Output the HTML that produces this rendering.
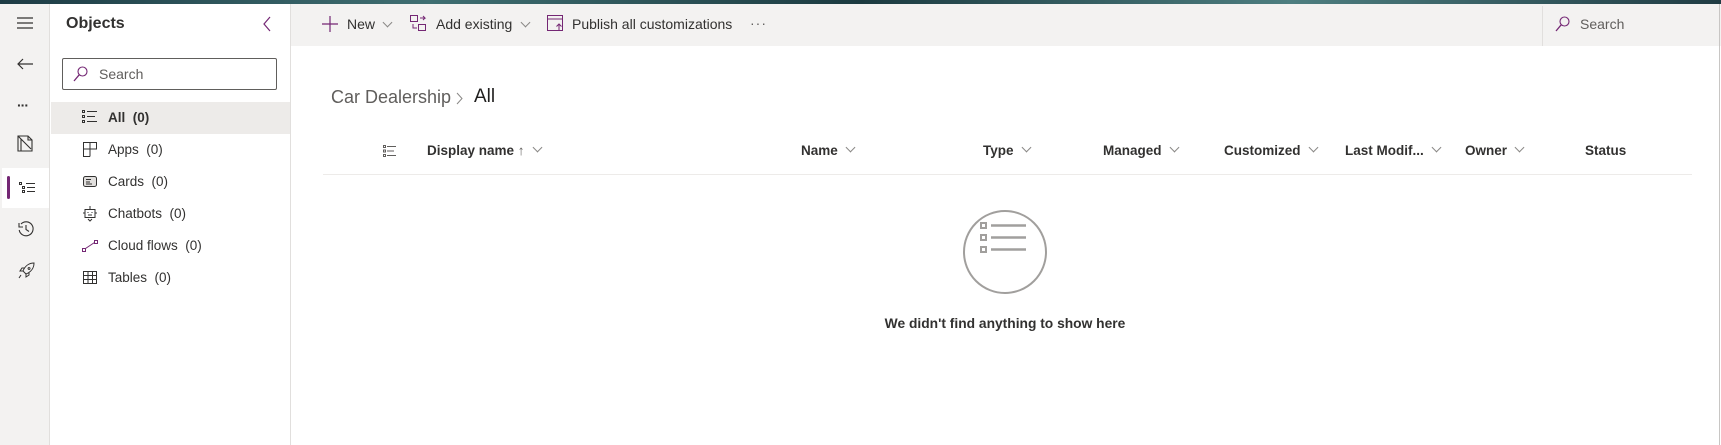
<!DOCTYPE html>
<html><head><meta charset="utf-8"><style>
*{margin:0;padding:0;box-sizing:border-box}
body{width:1721px;height:445px;overflow:hidden;background:#fff;font-family:"Liberation Sans",sans-serif;color:#323130;position:relative;font-size:14px}
.abs{position:absolute}
#strip{left:0;top:0;width:1721px;height:4px;background:linear-gradient(90deg,#1d3b44,#3f6f72,#1b3a40,#4d7e80,#203c44)}
#rail{left:0;top:4px;width:50px;height:441px;background:#f3f2f1;border-right:1px solid #e1dfdd}
#panel{left:50px;top:4px;width:241px;height:441px;background:#fff;border-right:1px solid #e1dfdd}
#top{left:291px;top:4px;width:1430px;height:42px;background:#f3f2f1}
.t{position:absolute;white-space:nowrap}
svg{position:absolute;overflow:visible}
.row{position:absolute;left:51px;width:239px;height:32px}
.hd{position:absolute;top:143px;font-size:13.5px;font-weight:bold;color:#323130;white-space:nowrap}
.chev{display:inline-block;width:7px;height:7px;border-right:1px solid #8a8886;border-bottom:1px solid #8a8886;transform:rotate(45deg);margin-left:9px;position:relative;top:-4px}
.tc{position:absolute;width:7px;height:7px;border-right:1px solid #8a8886;border-bottom:1px solid #8a8886;transform:rotate(45deg)}
</style></head><body>
<div id="strip" class="abs"></div>
<div id="rail" class="abs"></div>
<div id="panel" class="abs"></div>
<div id="top" class="abs"></div>
<div class="abs" style="left:1542px;top:6px;width:1px;height:40px;background:#e1dfdd"></div>
<div class="abs" style="left:1719px;top:4px;width:1px;height:441px;background:#c8c6c4"></div>

<!-- rail icons -->
<svg style="left:17px;top:17px" width="16" height="12"><path d="M0 1h16M0 6h16M0 11h16" stroke="#323130" stroke-width="1.2"/></svg>
<svg style="left:17px;top:58px" width="16" height="12"><path d="M16 6H1M6 1L1 6l5 5" stroke="#323130" stroke-width="1.2" fill="none"/></svg>
<div class="t" style="left:17px;top:97px;font-size:14px;font-weight:bold;letter-spacing:-1px">···</div>
<svg style="left:17px;top:135px" width="16" height="17"><path d="M1 1h10l4 4v11H1zM1 1l13 13M4 4v12M11 1v4h4" stroke="#323130" stroke-width="1.1" fill="none"/></svg>
<div class="abs" style="left:2px;top:168px;width:47px;height:40px;background:#fff"></div>
<div class="abs" style="left:7px;top:176px;width:3px;height:23px;background:#742774;border-radius:2px"></div>
<svg style="left:19px;top:182px" width="16" height="12"><path d="M0.5 0.5h2v2h-2zM3.5 4.5h2v2h-2zM3.5 8.5h2v2h-2zM7 1.5h9M8 5.5h8M8 9.5h8" stroke="#323130" stroke-width="1" fill="none"/></svg>
<svg style="left:18px;top:221px" width="16" height="16"><path d="M3 3A7 7 0 1 1 1.2 9M1 2v4h4M8 4v4.5l3 2" stroke="#323130" stroke-width="1.1" fill="none"/></svg>
<svg style="left:18px;top:262px" width="17" height="17"><path d="M16 1c-5 0-9 3-11 8l3 3c5-2 8-6 8-11zM5 9l-3 0 2-3h3M8 12v3l3-2v-3M3 13l-2 3M11 5.5a1 1 0 1 0 .1 0" stroke="#323130" stroke-width="1" fill="none"/></svg>

<!-- panel -->
<div class="t" style="left:66px;top:15px;font-size:16px;font-weight:bold">Objects</div>
<svg style="left:263px;top:16px" width="8" height="16"><path d="M7 1L1 8l6 7" stroke="#742774" stroke-width="1.2" fill="none"/></svg>
<div class="abs" style="left:62px;top:58px;width:215px;height:32px;border:1px solid #605e5c;border-radius:2px"></div>
<svg style="left:73px;top:66px" width="15" height="16"><circle cx="9.5" cy="5.5" r="4.5" stroke="#742774" stroke-width="1.1" fill="none"/><path d="M6.3 8.7L1 15" stroke="#742774" stroke-width="1.3"/></svg>
<div class="t" style="left:99px;top:66px;color:#605e5c">Search</div>
<div class="row" style="top:102px;background:#edebe9"></div>
<svg style="left:82px;top:110px" width="16" height="14"><path d="M0.5 0.5h2v2h-2zM0.5 5.5h2v2h-2zM0.5 10.5h2v2h-2zM5 1.5h10M5 6.5h8M5 11.5h10" stroke="#323130" stroke-width="1" fill="none"/></svg>
<div class="t" style="left:108px;top:110px;font-weight:bold;font-size:13.5px">All&nbsp; (0)</div>
<svg style="left:83px;top:142px" width="14" height="15"><path d="M0.5 0.5h13v6.5h-13zM7 0.5v14M0.5 7v7.5H7" stroke="#323130" stroke-width="1" fill="none"/></svg>
<div class="t" style="left:108px;top:142px;font-size:13.5px">Apps&nbsp; (0)</div>
<svg style="left:83px;top:176px" width="14" height="12"><rect x="0.5" y="0.5" width="13" height="10" rx="2" stroke="#323130" fill="#e1dfdd"/><path d="M3 3.5h5M3 6h4M3 8h6" stroke="#323130"/></svg>
<div class="t" style="left:108px;top:174px;font-size:13.5px">Cards&nbsp; (0)</div>
<svg style="left:83px;top:206px" width="14" height="16"><path d="M7 0v3M2 3.5h10v8H2zM0 7h2M12 7h2M5 13l2 2 2-2M5 6v1M9 6v1M5 9h4" stroke="#323130" stroke-width="1" fill="none"/></svg>
<div class="t" style="left:108px;top:206px;font-size:13.5px">Chatbots&nbsp; (0)</div>
<svg style="left:82px;top:240px" width="16" height="13"><path d="M0.5 8.5h3v3h-3zM12.5 0.5h3v3h-3zM3.5 8.5l9-6" stroke="#742774" stroke-width="1" fill="none"/></svg>
<div class="t" style="left:108px;top:238px;font-size:13.5px">Cloud flows&nbsp; (0)</div>
<svg style="left:83px;top:271px" width="14" height="13"><path d="M0.5 0.5h13v12h-13zM0.5 4.5h13M0.5 8.5h13M5 0.5v12M9.5 0.5v12" stroke="#323130" stroke-width="1" fill="none"/></svg>
<div class="t" style="left:108px;top:270px;font-size:13.5px">Tables&nbsp; (0)</div>

<!-- toolbar -->
<svg style="left:322px;top:16px" width="16" height="16"><path d="M8 0v16M0 8h16" stroke="#742774" stroke-width="1.2"/></svg>
<div class="t" style="left:347px;top:16px">New</div>
<div class="tc" style="left:384px;top:19px"></div>
<svg style="left:410px;top:15px" width="17" height="17"><path d="M0.5 0.5h7v6h-7zM8.5 9.5h7v6h-7zM10 3h5l-2-2M15 3l-2 2M3 9v4h4" stroke="#742774" stroke-width="1" fill="none"/></svg>
<div class="t" style="left:436px;top:16px">Add existing</div>
<div class="tc" style="left:522px;top:19px"></div>
<svg style="left:547px;top:15px" width="17" height="17"><path d="M0.5 0.5h15v15h-15zM0.5 4h15M12 16v-7M9.5 11.5L12 9l2.5 2.5" stroke="#742774" stroke-width="1" fill="none"/></svg>
<div class="t" style="left:572px;top:16px">Publish all customizations</div>
<div class="t" style="left:750px;top:15px;font-size:14px;letter-spacing:1px;color:#605e5c">···</div>
<svg style="left:1555px;top:16px" width="15" height="16"><circle cx="9.5" cy="5.5" r="4.5" stroke="#742774" stroke-width="1.1" fill="none"/><path d="M6.3 8.7L1 15" stroke="#742774" stroke-width="1.3"/></svg>
<div class="t" style="left:1580px;top:16px;color:#605e5c">Search</div>

<!-- content -->
<div class="t" style="left:331px;top:87px;font-size:18px;color:#605e5c">Car Dealership</div>
<svg style="left:456px;top:92px" width="7" height="13"><path d="M1 1l5 5.5L1 12" stroke="#8a8886" fill="none"/></svg>
<div class="t" style="left:474px;top:86px;font-size:19px;color:#201f1e">All</div>

<svg style="left:383px;top:145px" width="14" height="13"><path d="M0.5 0.5h2v2h-2zM0.5 5h2v2h-2zM0.5 9.5h2v2h-2zM4 1.5h9M4 6h7M4 10.5h9" stroke="#605e5c" stroke-width="1" fill="none"/></svg>
<div class="hd" style="left:427px">Display name <span style="font-weight:normal;color:#605e5c">↑</span><span class="chev"></span></div>
<div class="hd" style="left:801px">Name<span class="chev"></span></div>
<div class="hd" style="left:983px">Type<span class="chev"></span></div>
<div class="hd" style="left:1103px">Managed<span class="chev"></span></div>
<div class="hd" style="left:1224px">Customized<span class="chev"></span></div>
<div class="hd" style="left:1345px">Last Modif...<span class="chev"></span></div>
<div class="hd" style="left:1465px">Owner<span class="chev"></span></div>
<div class="hd" style="left:1585px">Status</div>
<div class="abs" style="left:323px;top:174px;width:1369px;height:1px;background:#edebe9"></div>

<svg style="left:963px;top:210px" width="86" height="86"><circle cx="42" cy="42" r="41" stroke="#a19f9d" stroke-width="2" fill="none"/>
<path d="M18 13h5v5h-5zM18 25h5v5h-5zM18 37h5v5h-5z" stroke="#a19f9d" stroke-width="2" fill="none"/>
<path d="M28 15.5h35M28 27.5h35M28 39.5h35" stroke="#a19f9d" stroke-width="2.5"/></svg>
<div class="t" style="left:855px;top:316px;width:300px;text-align:center;font-size:13.8px;font-weight:bold;color:#323130">We didn't find anything to show here</div>
</body></html>
